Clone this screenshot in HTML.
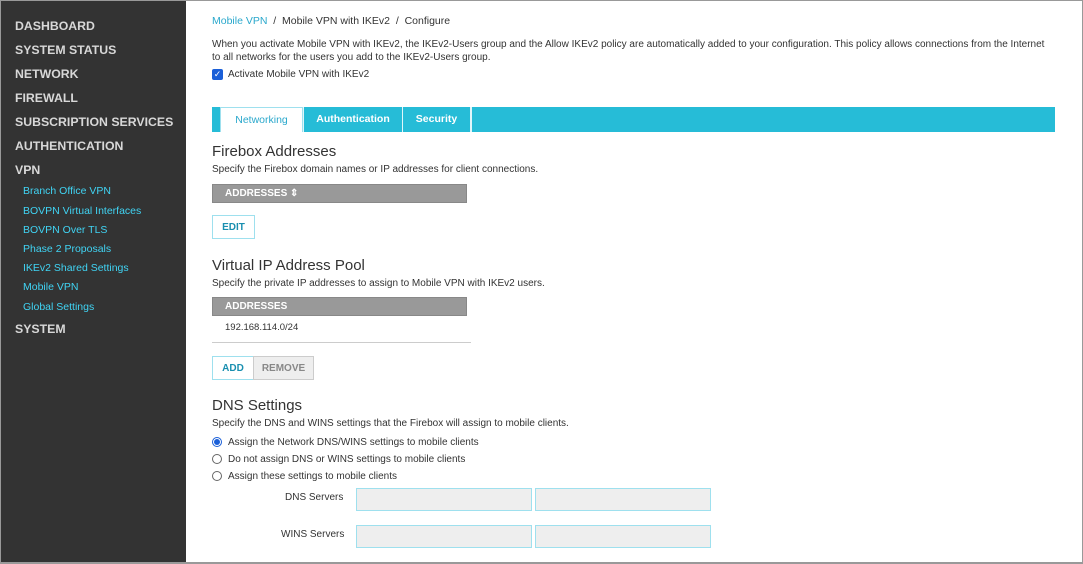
<!DOCTYPE html>
<html><head><style>
*{margin:0;padding:0;box-sizing:border-box}
body{width:1083px;height:564px;position:relative;overflow:hidden;font-family:"Liberation Sans",sans-serif;background:#fff;color:#333}
.a{position:absolute;white-space:nowrap}
#frame{position:absolute;left:0;top:0;width:1083px;height:564px;border:1px solid #999;border-bottom:2px solid #999;pointer-events:none}
#side{position:absolute;left:0;top:0;width:186px;height:564px;background:#333}
.n{position:absolute;left:15px;font-weight:bold;font-size:12.3px;color:#d8d8d8;transform:translateY(-50%)}
.s{position:absolute;left:23px;font-size:10.5px;color:#40d4f4;transform:translateY(-50%)}
.t{font-size:10px;color:#333}
.h{font-size:15px;color:#333}
.th{background:#999;border:1px solid #888;color:#fff;font-weight:bold;font-size:10px;padding-left:12px;line-height:17px}
.btn{position:absolute;border:1px solid #9ee0ee;background:#fff;color:#1a8fb0;font-weight:bold;font-size:10px;text-align:center;line-height:23px;height:24px}
.inp{position:absolute;height:23px;width:176px;background:#eee;border:1px solid #9ee0ee}
.rad{position:absolute;width:10px;height:10px;border:1px solid #666;border-radius:50%;background:#fff}
</style></head><body>
<div id="side">
<div class="n" style="top:26px">DASHBOARD</div>
<div class="n" style="top:50px">SYSTEM STATUS</div>
<div class="n" style="top:74px">NETWORK</div>
<div class="n" style="top:98px">FIREWALL</div>
<div class="n" style="top:122px">SUBSCRIPTION SERVICES</div>
<div class="n" style="top:146px">AUTHENTICATION</div>
<div class="n" style="top:170px">VPN</div>
<div class="s" style="top:191px">Branch Office VPN</div>
<div class="s" style="top:211px">BOVPN Virtual Interfaces</div>
<div class="s" style="top:230px">BOVPN Over TLS</div>
<div class="s" style="top:249px">Phase 2 Proposals</div>
<div class="s" style="top:268px">IKEv2 Shared Settings</div>
<div class="s" style="top:287px">Mobile VPN</div>
<div class="s" style="top:307px">Global Settings</div>
<div class="n" style="top:329px">SYSTEM</div>
</div>
<div class="a t" style="left:212px;top:15px;font-size:10.5px"><span style="color:#2aa8cc">Mobile VPN</span> &nbsp;/&nbsp; Mobile VPN with IKEv2 &nbsp;/&nbsp; Configure</div>
<div class="a t" style="left:212px;top:38px;line-height:13px">When you activate Mobile VPN with IKEv2, the IKEv2-Users group and the Allow IKEv2 policy are automatically added to your configuration. This policy allows connections from the Internet<br>to all networks for the users you add to the IKEv2-Users group.</div>
<div class="a" style="left:212px;top:69px;width:11px;height:11px;background:#1a5fd8;border-radius:2px;color:#fff;font-size:9px;line-height:11px;text-align:center">✓</div>
<div class="a t" style="left:228px;top:69px">Activate Mobile VPN with IKEv2</div>
<div class="a" style="left:212px;top:107px;width:843px;height:25px;background:#26bcd7"></div>
<div class="a" style="left:220px;top:107px;width:83px;height:25px;background:#fff;border:1px solid #9ee0ee;border-bottom:none;color:#2aa8cc;font-size:10.5px;text-align:center;line-height:25px">Networking</div>
<div class="a" style="left:303px;top:107px;width:1px;height:25px;background:#e0f6fa"></div>
<div class="a" style="left:304px;top:107px;width:98px;height:25px;color:#fff;font-weight:bold;font-size:10.5px;text-align:center;line-height:25px">Authentication</div>
<div class="a" style="left:402px;top:107px;width:1px;height:25px;background:#e0f6fa"></div>
<div class="a" style="left:403px;top:107px;width:67px;height:25px;color:#fff;font-weight:bold;font-size:10.5px;text-align:center;line-height:25px">Security</div>
<div class="a" style="left:470px;top:107px;width:2px;height:25px;background:#e0f6fa"></div>
<div class="a h" style="left:212px;top:143px">Firebox Addresses</div>
<div class="a t" style="left:212px;top:164px">Specify the Firebox domain names or IP addresses for client connections.</div>
<div class="a th" style="left:212px;top:184px;width:255px;height:19px">ADDRESSES ⇕</div>
<div class="btn" style="left:212px;top:215px;width:43px">EDIT</div>
<div class="a h" style="left:212px;top:257px">Virtual IP Address Pool</div>
<div class="a t" style="left:212px;top:278px">Specify the private IP addresses to assign to Mobile VPN with IKEv2 users.</div>
<div class="a th" style="left:212px;top:297px;width:255px;height:19px">ADDRESSES</div>
<div class="a t" style="left:225px;top:322px;font-size:9.5px">192.168.114.0/24</div>
<div class="a" style="left:212px;top:342px;width:259px;height:1px;background:#ccc"></div>
<div class="btn" style="left:212px;top:356px;width:42px">ADD</div>
<div class="btn" style="left:253px;top:356px;width:61px;background:#eee;border-color:#ccc;color:#888">REMOVE</div>
<div class="a h" style="left:212px;top:397px">DNS Settings</div>
<div class="a t" style="left:212px;top:418px">Specify the DNS and WINS settings that the Firebox will assign to mobile clients.</div>
<div class="rad" style="left:212px;top:437px;border-color:#1a5fd8"><div style="width:6px;height:6px;margin:1px;border-radius:50%;background:#1a5fd8"></div></div>
<div class="a t" style="left:228px;top:437px">Assign the Network DNS/WINS settings to mobile clients</div>
<div class="rad" style="left:212px;top:454px"></div>
<div class="a t" style="left:228px;top:454px">Do not assign DNS or WINS settings to mobile clients</div>
<div class="rad" style="left:212px;top:471px"></div>
<div class="a t" style="left:228px;top:471px">Assign these settings to mobile clients</div>
<div class="a t" style="left:285px;top:492px">DNS Servers</div>
<div class="inp" style="left:356px;top:488px"></div>
<div class="inp" style="left:535px;top:488px"></div>
<div class="a t" style="left:281px;top:529px">WINS Servers</div>
<div class="inp" style="left:356px;top:525px"></div>
<div class="inp" style="left:535px;top:525px"></div>
<div id="frame"></div>
</body></html>
